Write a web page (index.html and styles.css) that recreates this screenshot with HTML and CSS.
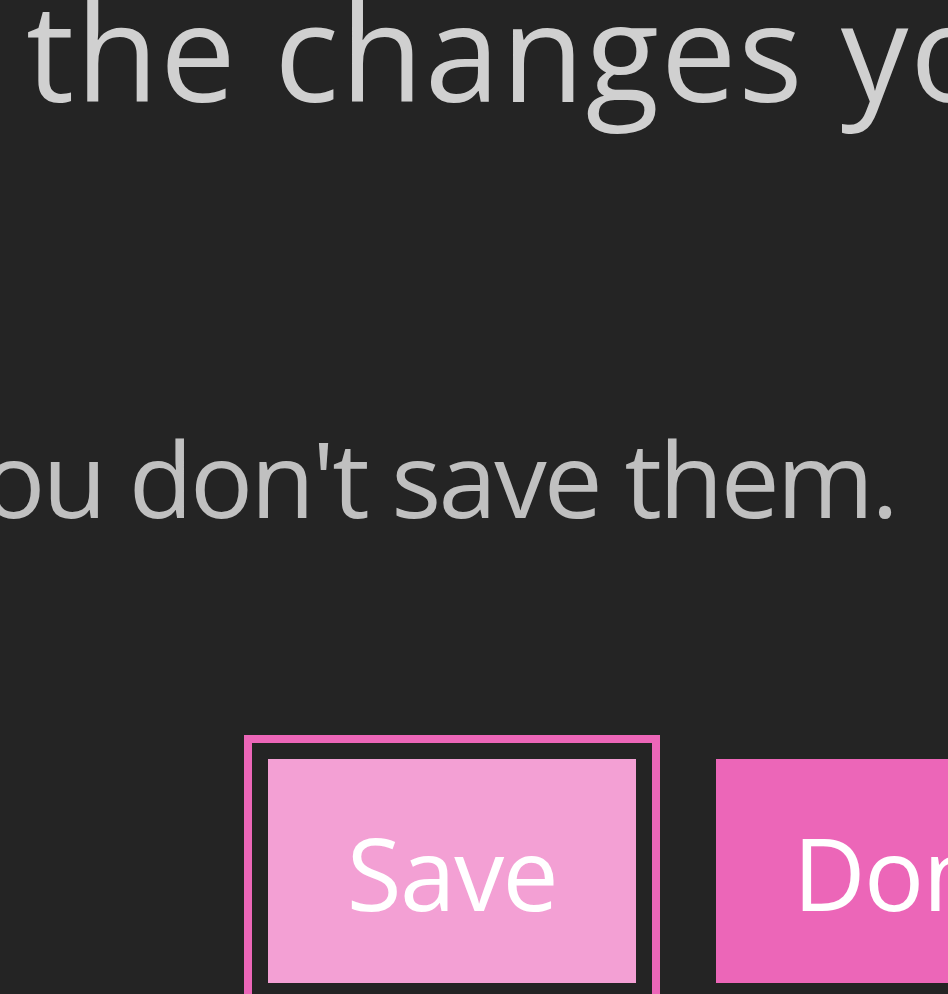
FILE: index.html
```html
<!DOCTYPE html>
<html lang="en">
<head>
<meta charset="utf-8">
<title>Save changes</title>
<link rel="stylesheet" href="styles.css">
</head>
<body>
<div class="dialog">
  <p class="instruction">the changes you made to Untitled?</p>
  <div class="content"><span>Your changes will be lost if you don't save them.</span></div>
  <div class="buttons">
    <button class="btn btn-primary is-focused">Save</button>
    <button class="btn">Don't save</button>
    <button class="btn">Cancel</button>
  </div>
</div>
</body>
</html>
```

FILE: styles.css
```css
html, body {
  margin: 0;
  padding: 0;
  background: #242424;
  overflow: hidden;
  width: 948px;
  height: 994px;
}

.dialog {
  font-family: "Open Sans", "Noto Sans", sans-serif;
  white-space: nowrap;
}

.instruction {
  margin: 0;
  padding-left: 26px;
  font-size: 135px;
  line-height: 100px;
  color: #d0d0d0;
  letter-spacing: 1.6px;
}

.content {
  display: flex;
  justify-content: flex-end;
  padding-right: 52px;
  margin-top: 328px;
  font-size: 105px;
  line-height: 100px;
  color: #c0c0c0;
  letter-spacing: -2.8px;
}

.buttons {
  display: flex;
  gap: 80px;
  padding-left: 268px;
  margin-top: 231px;
}

.btn {
  flex: none;
  min-width: 368px;
  height: 224px;
  border: none;
  padding: 2px 77px 0;
  margin: 0;
  background: #ec66b8;
  color: #ffffff;
  font-family: "Open Sans", "Noto Sans", sans-serif;
  font-size: 100px;
  line-height: 1;
  letter-spacing: -1.5px;
  white-space: nowrap;
}

.btn-primary {
  background: #f3a0d4;
}

.is-focused {
  outline: 8px solid #ec66b8;
  outline-offset: 16px;
}
```
